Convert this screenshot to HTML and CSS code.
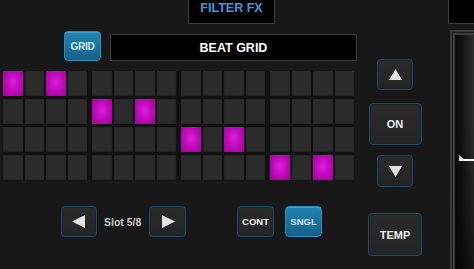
FILE: index.html
```html
<!DOCTYPE html>
<html>
<head>
<meta charset="utf-8">
<link rel="stylesheet" href="styles.css">
</head>
<body>
<div class="app">
  <div class="left">
    <div class="title-row"><div class="title">FILTER FX</div></div>
    <div class="mode-row">
      <div class="btn active grid-btn">GRID</div>
      <div class="display">BEAT GRID</div>
    </div>
    <div class="pads">
      <div class="group">
        <div class="pad on"></div><div class="pad"></div><div class="pad on"></div><div class="pad"></div>
        <div class="pad"></div><div class="pad"></div><div class="pad"></div><div class="pad"></div>
        <div class="pad"></div><div class="pad"></div><div class="pad"></div><div class="pad"></div>
        <div class="pad"></div><div class="pad"></div><div class="pad"></div><div class="pad"></div>
      </div>
      <div class="group">
        <div class="pad"></div><div class="pad"></div><div class="pad"></div><div class="pad"></div>
        <div class="pad on"></div><div class="pad"></div><div class="pad on"></div><div class="pad"></div>
        <div class="pad"></div><div class="pad"></div><div class="pad"></div><div class="pad"></div>
        <div class="pad"></div><div class="pad"></div><div class="pad"></div><div class="pad"></div>
      </div>
      <div class="group">
        <div class="pad"></div><div class="pad"></div><div class="pad"></div><div class="pad"></div>
        <div class="pad"></div><div class="pad"></div><div class="pad"></div><div class="pad"></div>
        <div class="pad on"></div><div class="pad"></div><div class="pad on"></div><div class="pad"></div>
        <div class="pad"></div><div class="pad"></div><div class="pad"></div><div class="pad"></div>
      </div>
      <div class="group">
        <div class="pad"></div><div class="pad"></div><div class="pad"></div><div class="pad"></div>
        <div class="pad"></div><div class="pad"></div><div class="pad"></div><div class="pad"></div>
        <div class="pad"></div><div class="pad"></div><div class="pad"></div><div class="pad"></div>
        <div class="pad on"></div><div class="pad"></div><div class="pad on"></div><div class="pad"></div>
      </div>
    </div>
    <div class="bottom-row">
      <div class="btn arrow-btn"><svg width="14" height="13" viewBox="0 0 14 13"><polygon points="0,6.5 13,0 13,13" fill="#e2e2e2"/></svg></div>
      <div class="slot">Slot 5/8</div>
      <div class="btn arrow-btn next"><svg width="14" height="13" viewBox="0 0 14 13"><polygon points="14,6.5 1,0 1,13" fill="#e2e2e2"/></svg></div>
      <div class="btn small cont">CONT</div>
      <div class="btn small active sngl">SNGL</div>
    </div>
  </div>
  <div class="controls">
    <div class="btn up"><svg width="13" height="11" viewBox="0 0 13 11"><polygon points="6.5,0 13,11 0,11" fill="#e2e2e2"/></svg></div>
    <div class="btn big on-btn">ON</div>
    <div class="btn down"><svg width="13" height="11" viewBox="0 0 13 11"><polygon points="6.5,11 13,0 0,0" fill="#e2e2e2"/></svg></div>
    <div class="btn big temp">TEMP</div>
  </div>
  <div class="rail">
    <div class="rail-top"></div>
    <div class="rail-outer">
      <div class="rail-inner">
        <div class="marker"></div>
      </div>
    </div>
  </div>
</div>
</body>
</html>
```

FILE: styles.css
```css
* { box-sizing: border-box; }
html, body {
  margin: 0;
  padding: 0;
  width: 474px;
  height: 269px;
  overflow: hidden;
  background: #181818;
  font-family: "Liberation Sans", Arial, sans-serif;
}
.app {
  display: flex;
  width: 474px;
  height: 269px;
}
.left {
  width: 360px;
  display: flex;
  flex-direction: column;
}
.title-row {
  height: 24px;
  padding-left: 188px;
}
.title {
  width: 87px;
  height: 24px;
  background: #000;
  border: 1px solid #3d3d3d;
  border-top: none;
  color: #3a9be0;
  font-weight: bold;
  font-size: 12.5px;
  line-height: 17px;
  text-align: center;
}
.mode-row {
  margin-top: 7px;
  padding-left: 64px;
  display: flex;
  align-items: center;
  gap: 9px;
  height: 30px;
}
.btn {
  display: flex;
  align-items: center;
  justify-content: center;
  background: linear-gradient(#2b2b2b, #242424);
  border: 1px solid #1b4b60;
  box-shadow: inset 0 0 0 1px #15262e;
  border-radius: 4px;
  color: #f0f0f0;
  font-weight: bold;
  font-size: 11px;
}
.btn.active {
  background: linear-gradient(#2184b4, #155f86);
  border-color: #2a8cc2;
  box-shadow: inset 0 1px 0 #3aa0d4;
  color: #cfeaf8;
}
.grid-btn {
  width: 37px;
  height: 30px;
  font-size: 10px;
  letter-spacing: -0.3px;
}
.display {
  width: 247px;
  height: 27px;
  margin-top: 3px;
  background: #000;
  border: 1px solid #3a3a3a;
  color: #fff;
  font-weight: bold;
  font-size: 12.5px;
  display: flex;
  align-items: center;
  justify-content: center;
}
.pads {
  margin-top: 10px;
  margin-left: 3px;
  display: flex;
  gap: 5px;
  align-self: flex-start;
  background: #121212;
}
.group {
  display: grid;
  grid-template-columns: repeat(4, 19.5px);
  grid-auto-rows: 25px;
  gap: 3px 2px;
}
.pad {
  background: #2b2b2b;
  box-shadow: inset 0 0 0 1px #262626;
}
.pad.on {
  background: radial-gradient(ellipse at 50% 45%, #da20d4 0%, #c20abe 45%, #a2009a 100%);
  box-shadow: none;
}
.bottom-row {
  margin-top: 26px;
  margin-left: 61px;
  display: flex;
  align-items: center;
  height: 31px;
}
.arrow-btn {
  width: 36px;
  height: 31px;
}
.arrow-btn.next {
  width: 37px;
}
.slot {
  margin: 0 8px 0 7px;
  width: 37px;
  color: #c9c9c9;
  font-weight: bold;
  font-size: 10.5px;
  white-space: nowrap;
  text-align: center;
}
.small {
  width: 37px;
  height: 31px;
  font-size: 9.5px;
}
.cont { margin-left: 51px; }
.sngl { margin-left: 11px; }
.controls {
  width: 70px;
  display: flex;
  flex-direction: column;
  align-items: center;
}
.up {
  margin-top: 59px;
  width: 36px;
  height: 31px;
}
.on-btn {
  margin-top: 13px;
  width: 53px;
  height: 42px;
}
.down {
  margin-top: 10px;
  width: 36px;
  height: 32px;
}
.temp {
  margin-top: 26px;
  width: 54px;
  height: 43px;
}
.big { font-size: 11px; }
.rail {
  margin-left: auto;
  width: 26px;
  display: flex;
  flex-direction: column;
}
.rail-top {
  height: 24px;
  background: #000;
  border-left: 1px solid #3d3d3d;
  border-bottom: 1px solid #3d3d3d;
}
.rail-outer {
  margin-top: 6px;
  margin-left: 2px;
  flex: 1;
  border-left: 2px solid #393939;
  border-top: 2px solid #393939;
  background: #1c1c1c;
  padding: 1px 0 0 1px;
}
.rail-inner {
  position: relative;
  height: 100%;
  border-left: 2px solid #3e3e3e;
  border-top: 2px solid #3e3e3e;
  background:
    linear-gradient(to bottom, rgba(0,0,0,0) 40%, rgba(0,0,0,0.5) 100%),
    linear-gradient(to right, #080808 0%, #111 30%, #2c2c2c 100%);
}
.marker {
  position: absolute;
  left: 4px;
  right: 0;
  top: 124px;
  height: 2px;
  background: #f2f2f2;
}
.marker::before {
  content: "";
  position: absolute;
  left: 0;
  bottom: 2px;
  border-left: 5px solid #cfcfcf;
  border-top: 4px solid transparent;
  width: 0;
  height: 0;
}
```
